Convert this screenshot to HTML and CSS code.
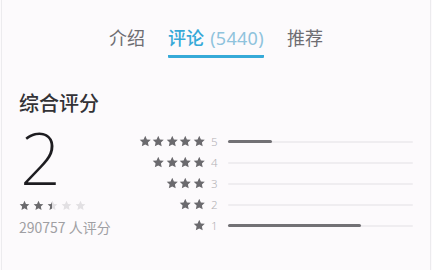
FILE: index.html
```html
<!DOCTYPE html>
<html lang="zh">
<head>
<meta charset="utf-8">
<link rel="stylesheet" href="styles.css">
</head>
<body>
<svg width="0" height="0" class="defs">
  <defs>
    <symbol id="star" viewBox="0 0 24 24"><path d="M12 1.6l3.2 6.9 7.4.8-5.5 5.1 1.5 7.4L12 18.1l-6.6 3.7 1.5-7.4-5.5-5.1 7.4-.8z"/></symbol>
    <linearGradient id="half" x1="0" x2="1" y1="0" y2="0">
      <stop offset="0.5" stop-color="#6b6a6d"/>
      <stop offset="0.5" stop-color="#e2e0e3"/>
    </linearGradient>
  </defs>
</svg>
<div class="page">
  <nav class="tabs">
    <div class="tab">介绍</div>
    <div class="tab active">评论 <span class="count">(5440)</span></div>
    <div class="tab">推荐</div>
  </nav>
  <section class="summary">
    <h2 class="title">综合评分</h2>
    <div class="body">
      <div class="left">
        <div class="score">2</div>
        <div class="mini-stars">
          <svg class="s on"><use href="#star"/></svg>
          <svg class="s on"><use href="#star"/></svg>
          <svg class="s half"><use href="#star"/></svg>
          <svg class="s off"><use href="#star"/></svg>
          <svg class="s off"><use href="#star"/></svg>
        </div>
        <div class="votes">290757 人评分</div>
      </div>
      <div class="dist">
        <div class="stars"><svg class="d"><use href="#star"/></svg><svg class="d"><use href="#star"/></svg><svg class="d"><use href="#star"/></svg><svg class="d"><use href="#star"/></svg><svg class="d"><use href="#star"/></svg></div>
        <div class="num">5</div>
        <div class="track"><div class="fill" style="width:24%"></div></div>

        <div class="stars"><svg class="d"><use href="#star"/></svg><svg class="d"><use href="#star"/></svg><svg class="d"><use href="#star"/></svg><svg class="d"><use href="#star"/></svg></div>
        <div class="num">4</div>
        <div class="track"><div class="fill" style="width:0%"></div></div>

        <div class="stars"><svg class="d"><use href="#star"/></svg><svg class="d"><use href="#star"/></svg><svg class="d"><use href="#star"/></svg></div>
        <div class="num">3</div>
        <div class="track"><div class="fill" style="width:0%"></div></div>

        <div class="stars"><svg class="d"><use href="#star"/></svg><svg class="d"><use href="#star"/></svg></div>
        <div class="num">2</div>
        <div class="track"><div class="fill" style="width:0%"></div></div>

        <div class="stars"><svg class="d"><use href="#star"/></svg></div>
        <div class="num">1</div>
        <div class="track"><div class="fill" style="width:72%"></div></div>
      </div>
    </div>
  </section>
</div>
</body>
</html>
```

FILE: styles.css
```css
* { box-sizing: border-box; }
html, body { margin: 0; padding: 0; }
body {
  background: #fcfafc;
  font-family: "Noto Sans CJK SC", "Noto Sans", sans-serif;
  width: 432px;
  height: 270px;
  overflow: hidden;
}
.defs { position: absolute; }
.page {
  height: 270px;
  border-left: 1px solid #ecebee;
  border-right: 1px solid #ecebee;
  margin: 0 1px;
}
.tabs {
  display: flex;
  justify-content: center;
  gap: 23px;
  padding-top: 24px;
  padding-left: 0;
}
.tab {
  font-size: 18px;
  line-height: 27px;
  color: #6e6d72;
  padding-bottom: 3px;
  border-bottom: 3px solid transparent;
}
.tab.active {
  color: #36a9d8;
  border-bottom: 3px solid #36aad8;
  border-radius: 1px;
  font-weight: 500;
}
.count { color: #8fc3dc; font-weight: 400; font-family: "Noto Sans", sans-serif; margin-left: 2px; letter-spacing: 0.3px; }
.summary { padding: 0 17px 0 17px; margin-top: 34px; }
.title {
  margin: 0;
  font-size: 20px;
  line-height: 22px;
  font-weight: 500;
  color: #333236;
}
.body { display: flex; margin-top: 10px; }
.left { width: 112px; flex: none; }
.score {
  font-family: "Noto Sans", sans-serif;
  font-size: 72px;
  font-weight: 200;
  line-height: 66px;
  color: #1d1c20;
  margin-left: 1px;
}
.mini-stars { display: flex; gap: 3px; margin-top: 10px; margin-left: 0; }
.s { width: 11px; height: 11px; }
.s.on { fill: #6b6a6d; }
.s.half { fill: url(#half); }
.s.off { fill: #e2e0e3; }
.votes {
  margin-top: 7px;
  font-size: 14px;
  line-height: 18px;
  color: #a09fa3;
  white-space: nowrap;
}
.dist {
  flex: 1;
  display: grid;
  grid-template-columns: 74px 23px 1fr;
  grid-auto-rows: 21px;
  align-items: center;
  padding-top: 7px;
}
.stars { display: flex; justify-content: flex-end; gap: 0.9px; }
.d { width: 12.5px; height: 12.5px; fill: #6b6a6e; }
.num {
  font-family: "Noto Sans", sans-serif;
  font-size: 11.5px;
  font-weight: 300;
  color: #b2b1b5;
  padding-left: 6px;
  line-height: 12px;
}
.track {
  height: 2px;
  background: #efedf0;
  border-radius: 1px;
}
.fill {
  height: 3px;
  margin-top: -0.5px;
  background: #727175;
  border-radius: 2px;
}
```
